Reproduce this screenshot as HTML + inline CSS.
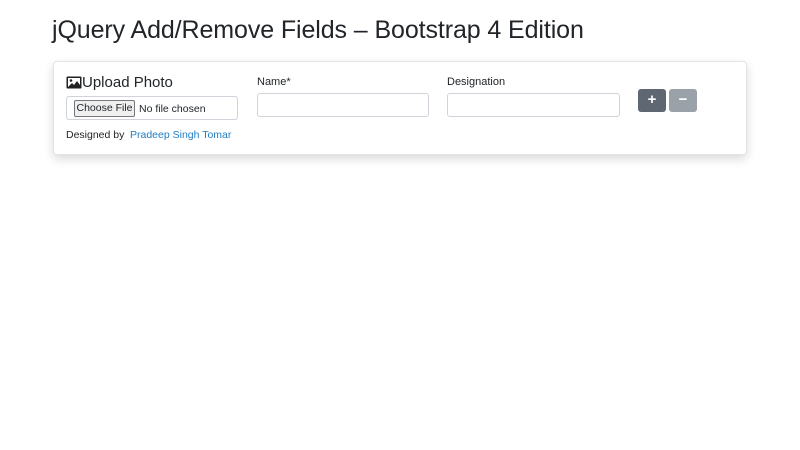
<!DOCTYPE html>
<html><head><meta charset="utf-8"><style>
body{margin:0;width:800px;height:450px;background:#fff;font-family:"Liberation Sans",sans-serif;color:#212529;position:relative;overflow:hidden}
.a{position:absolute}
h1{position:absolute;left:52px;top:16px;margin:0;font-weight:400;font-size:25px;letter-spacing:-0.1px}
.card{left:53px;top:61px;width:692px;height:92px;border:1px solid #e3e3e3;border-radius:4px;box-shadow:0 4px 10px rgba(0,0,0,.15);background:#fff}
.inp{border:1px solid #ced4da;border-radius:3px;background:#fff;height:22px}
.lbl{font-size:11px}
.btn{width:28px;height:23px;border-radius:3px;color:#fff;font-weight:bold;font-size:15px;text-align:center;line-height:22px}
</style></head><body>
<h1>jQuery Add/Remove Fields – Bootstrap 4 Edition</h1>
<div class="a card"></div>
<svg class="a" style="left:66px;top:76px" width="16" height="13" viewBox="0 0 16 13"><rect x="0.5" y="0.5" width="15" height="12" fill="#222" rx="1"/><rect x="2" y="2" width="12" height="9" fill="#fff"/><circle cx="5" cy="4.5" r="1.3" fill="#222"/><path d="M2 11 L6 7 L8 9 L11 5 L14 9 L14 11Z" fill="#222"/></svg>
<div class="a" style="left:82px;top:74px;font-size:15px">Upload Photo</div>
<div class="a inp" style="left:66px;top:96px;width:170px"></div>
<div class="a" style="left:74px;top:100px;width:61px;height:17px;background:#efefef;border:1px solid #777;border-radius:2px;font-size:10.5px;text-align:center;line-height:15px;box-sizing:border-box">Choose File</div>
<div class="a" style="left:139px;top:103px;font-size:10.5px">No file chosen</div>
<div class="a lbl" style="left:66px;top:129px;font-size:10.5px">Designed by</div>
<div class="a lbl" style="left:130px;top:129px;font-size:10.5px;color:#1e7ec3">Pradeep Singh Tomar</div>
<div class="a lbl" style="left:257px;top:76px">Name*</div>
<div class="a inp" style="left:257px;top:93px;width:170px"></div>
<div class="a lbl" style="left:447px;top:76px">Designation</div>
<div class="a inp" style="left:447px;top:93px;width:171px"></div>
<div class="a btn" style="left:638px;top:89px;background:#5f6872">+</div>
<div class="a btn" style="left:669px;top:89px;background:#9aa1a8">−</div>
</body></html>
